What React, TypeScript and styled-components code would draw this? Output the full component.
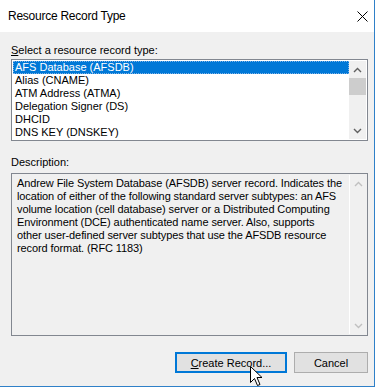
import React from 'react';
import styled, { createGlobalStyle } from 'styled-components';

const GlobalStyle = createGlobalStyle`
  body {
    margin: 0;
    background: #ffffff;
    font-family: "Liberation Sans", Arial, sans-serif;
  }
`;

const Page = styled.div`
  position: relative;
  display: flex;
  width: 381px;
  height: 388px;
  background: #ffffff;
  overflow: hidden;
`;

const Window = styled.div`
  box-sizing: border-box;
  width: 375px;
  height: 387px;
  display: flex;
  flex-direction: column;
  border-right: 1px solid #2f80c8;
  border-bottom: 1px solid #2f80c8;
`;

const TitleBar = styled.div`
  height: 32px;
  flex: none;
  display: flex;
  align-items: center;
  justify-content: space-between;
  padding: 0 6px 0 8px;
  background: #ffffff;
  font-size: 12px;
  letter-spacing: -0.25px;
  color: #000;
`;

const CloseIcon = styled.svg`
  width: 11px;
  height: 11px;
  margin-top: 1px;
`;

const Body = styled.div`
  flex: 1;
  display: flex;
  flex-direction: column;
  padding: 12px 6px 0 11px;
  background: #f0f0f0;
  font-size: 11px;
  color: #000;
`;

const Label = styled.div<{ $gap?: number }>`
  height: 13px;
  line-height: 13px;
  margin-top: ${p => p.$gap || 0}px;
  u { text-decoration: underline; }
`;

const ListBox = styled.div`
  box-sizing: border-box;
  width: 357px;
  height: 82px;
  margin-top: 2px;
  display: flex;
  padding: 1px;
  border: 1px solid #828790;
  background: #ffffff;
`;

const Items = styled.div`
  flex: 1;
  display: flex;
  flex-direction: column;
`;

const Item = styled.div<{ $selected?: boolean }>`
  box-sizing: border-box;
  height: 13px;
  line-height: 12px;
  padding-left: 2px;
  white-space: nowrap;
  color: ${p => (p.$selected ? '#ffffff' : '#000000')};
  background: ${p => (p.$selected ? '#0078d7' : 'transparent')};
  outline: ${p => (p.$selected ? '1px dotted #7fb3e6' : 'none')};
  outline-offset: -1px;
`;

const ScrollBar = styled.div<{ $disabled?: boolean }>`
  box-sizing: border-box;
  width: 17px;
  display: flex;
  flex-direction: column;
  background: #f0f0f0;
  border-left: ${p => (p.$disabled ? '1px solid #ffffff' : 'none')};
`;

const ArrowBtn = styled.div`
  height: 17px;
  flex: none;
  display: flex;
  align-items: center;
  justify-content: center;
`;

const Thumb = styled.div`
  height: 17px;
  flex: none;
  background: #cdcdcd;
`;

const Track = styled.div`
  flex: 1;
`;

const DescBox = styled.div`
  box-sizing: border-box;
  width: 357px;
  height: 163px;
  margin-top: 4px;
  display: flex;
  padding: 1px;
  border: 1px solid #828790;
  background: #f0f0f0;
`;

const DescText = styled.div`
  flex: 1;
  padding: 2px 0 0 4px;
  letter-spacing: -0.1px;
`;

const Line = styled.div`
  height: 13px;
  line-height: 13px;
  white-space: nowrap;
`;

const Footer = styled.div`
  display: flex;
  justify-content: flex-end;
  gap: 7px;
  margin-top: 16px;
  width: 357px;
`;

const Button = styled.div<{ $width: number; $default?: boolean }>`
  box-sizing: border-box;
  width: ${p => p.$width}px;
  height: 21px;
  display: flex;
  align-items: center;
  justify-content: center;
  background: #e1e1e1;
  border: ${p => (p.$default ? '2px solid #0078d7' : '1px solid #adadad')};
  font-size: 11px;
  u { text-decoration: underline; }
`;

const Backdrop = styled.div`
  flex: 1;
  background: #ffffff;
`;

const Cursor = styled.svg`
  position: absolute;
  left: 250px;
  top: 366px;
  width: 13px;
  height: 21px;
`;

function Chevron({ up, color }: { up?: boolean; color: string }) {
  return (
    <svg width="9" height="6" viewBox="0 0 9 6">
      <polyline
        points={up ? '1,5 4.5,1.5 8,5' : '1,1 4.5,4.5 8,1'}
        fill="none"
        stroke={color}
        strokeWidth="1.4"
      />
    </svg>
  );
}

const records = [
  'AFS Database (AFSDB)',
  'Alias (CNAME)',
  'ATM Address (ATMA)',
  'Delegation Signer (DS)',
  'DHCID',
  'DNS KEY (DNSKEY)',
];

const description = [
  'Andrew File System Database (AFSDB) server record. Indicates the',
  'location of either of the following standard server subtypes: an AFS',
  'volume location (cell database) server or a Distributed Computing',
  'Environment (DCE) authenticated name server. Also, supports',
  'other user-defined server subtypes that use the AFSDB resource',
  'record format. (RFC 1183)',
];

export default function App() {
  return (
    <Page>
      <GlobalStyle />
      <Window>
        <TitleBar>
          <span>Resource Record Type</span>
          <CloseIcon viewBox="0 0 11 11">
            <path d="M0.5 0.5 L10.5 10.5 M10.5 0.5 L0.5 10.5" stroke="#000" strokeWidth="1" />
          </CloseIcon>
        </TitleBar>
        <Body>
          <Label>
            <u>S</u>elect a resource record type:
          </Label>
          <ListBox>
            <Items>
              {records.map((r, i) => (
                <Item key={r} $selected={i === 0}>
                  {r}
                </Item>
              ))}
            </Items>
            <ScrollBar>
              <ArrowBtn>
                <Chevron up color="#606060" />
              </ArrowBtn>
              <Thumb />
              <Track />
              <ArrowBtn>
                <Chevron color="#606060" />
              </ArrowBtn>
            </ScrollBar>
          </ListBox>
          <Label $gap={15}>Description:</Label>
          <DescBox>
            <DescText>
              {description.map(l => (
                <Line key={l}>{l}</Line>
              ))}
            </DescText>
            <ScrollBar $disabled>
              <ArrowBtn>
                <Chevron up color="#c0c0c0" />
              </ArrowBtn>
              <Track />
              <ArrowBtn>
                <Chevron color="#c0c0c0" />
              </ArrowBtn>
            </ScrollBar>
          </DescBox>
          <Footer>
            <Button $width={112} $default>
              <span>
                <u>C</u>reate Record...
              </span>
            </Button>
            <Button $width={74}>Cancel</Button>
          </Footer>
        </Body>
      </Window>
      <Backdrop />
      <Cursor viewBox="0 0 13 21">
        <path
          d="M0.5 0.5 L0.5 16.5 L4.5 12.5 L7.5 19.5 L10 18.5 L7 11.5 L12 11.5 Z"
          fill="#ffffff"
          stroke="#000000"
          strokeWidth="1"
          strokeLinejoin="miter"
        />
      </Cursor>
    </Page>
  );
}
